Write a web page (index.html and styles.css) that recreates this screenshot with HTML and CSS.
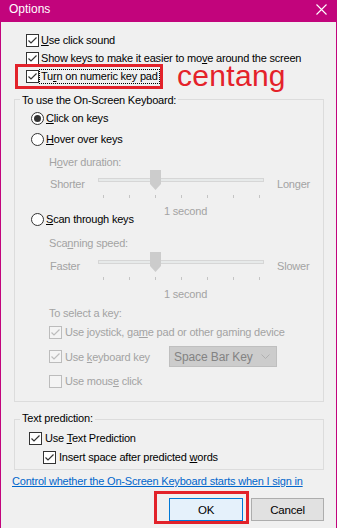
FILE: index.html
```html
<!DOCTYPE html>
<html>
<head>
<meta charset="utf-8">
<link rel="stylesheet" href="styles.css">
</head>
<body>
<div class="win">
  <div class="titlebar">
    <span class="title">Options</span>
    <svg class="close" width="11" height="11" viewBox="0 0 11 11"><path d="M0.5 0.5L10.5 10.5M10.5 0.5L0.5 10.5" stroke="#fff" stroke-width="1.1" fill="none"/></svg>
  </div>

  <div class="toprows">
    <div class="row cbrow"><span class="cb"><svg width="11" height="11" viewBox="0 0 11 11"><path d="M1.5 5.5L4 8L9.5 2.5" stroke="#333" stroke-width="1.2" fill="none"/></svg></span><span><u>U</u>se click sound</span></div>
    <div class="row cbrow"><span class="cb"><svg width="11" height="11" viewBox="0 0 11 11"><path d="M1.5 5.5L4 8L9.5 2.5" stroke="#333" stroke-width="1.2" fill="none"/></svg></span><span>Show keys to make it easier to mo<u>v</u>e around the screen</span></div>
    <div class="row cbrow"><span class="cb"><svg width="11" height="11" viewBox="0 0 11 11"><path d="M1.5 5.5L4 8L9.5 2.5" stroke="#333" stroke-width="1.2" fill="none"/></svg></span><span class="focus">Tu<u>r</u>n on numeric key pad</span></div>
  </div>

  <div class="group g1">
    <div class="legend">To use the On-Screen Keyboard:</div>
    <div class="row radrow r1"><span class="rb on"></span><span><u>C</u>lick on keys</span></div>
    <div class="row radrow r2"><span class="rb"></span><span><u>H</u>over over keys</span></div>
    <div class="dis lbl hover-lbl">H<u>o</u>ver duration:</div>
    <div class="slider s1">
      <span class="sl-left dis">Shorter</span>
      <svg class="track" width="166" height="28" viewBox="0 0 166 28">
        <rect x="0.5" y="8.5" width="165" height="3" fill="#e7eaea" stroke="#d6d6d6"/>
        <path d="M52 0h11v14l-5.5 6l-5.5-6z" fill="#cccccc"/>
        <path d="M5.5 25v3M31.5 25v3M57.5 25v3M83.5 25v3M109.5 25v3M135.5 25v3M161.5 25v3" stroke="#c4c4c4" stroke-width="1"/>
      </svg>
      <span class="sl-right dis">Longer</span>
    </div>
    <div class="dis lbl sec sec1">1 second</div>
    <div class="row radrow r3"><span class="rb"></span><span><u>S</u>can through keys</span></div>
    <div class="dis lbl scan-lbl">Sca<u>n</u>ning speed:</div>
    <div class="slider s2">
      <span class="sl-left dis">Faster</span>
      <svg class="track" width="166" height="28" viewBox="0 0 166 28">
        <rect x="0.5" y="8.5" width="165" height="3" fill="#e7eaea" stroke="#d6d6d6"/>
        <path d="M52 0h11v14l-5.5 6l-5.5-6z" fill="#cccccc"/>
        <path d="M5.5 25v3M31.5 25v3M57.5 25v3M83.5 25v3M109.5 25v3M135.5 25v3M161.5 25v3" stroke="#c4c4c4" stroke-width="1"/>
      </svg>
      <span class="sl-right dis">Slower</span>
    </div>
    <div class="dis lbl sec sec2">1 second</div>
    <div class="dis lbl sel-lbl">To select a key:</div>
    <div class="row drow d1"><span class="cb off"><svg width="11" height="11" viewBox="0 0 11 11"><path d="M1.5 5.5L4 8L9.5 2.5" stroke="#bcbcbc" stroke-width="1.2" fill="none"/></svg></span><span class="dis">Use joystick, ga<u>m</u>e pad or other gaming device</span></div>
    <div class="row drow d2"><span class="cb off"><svg width="11" height="11" viewBox="0 0 11 11"><path d="M1.5 5.5L4 8L9.5 2.5" stroke="#bcbcbc" stroke-width="1.2" fill="none"/></svg></span><span class="dis kbd-lbl">Use <u>k</u>eyboard key</span>
      <div class="select"><span>Space Bar Key</span><svg width="9" height="6" viewBox="0 0 9 6"><path d="M0.5 0.5L4.5 4.5L8.5 0.5" stroke="#b0b0b0" fill="none"/></svg></div>
    </div>
    <div class="row drow d3"><span class="cb off"></span><span class="dis">Use mous<u>e</u> click</span></div>
  </div>

  <div class="group g2">
    <div class="legend">Text prediction:</div>
    <div class="row tprow t1"><span class="cb"><svg width="11" height="11" viewBox="0 0 11 11"><path d="M1.5 5.5L4 8L9.5 2.5" stroke="#333" stroke-width="1.2" fill="none"/></svg></span><span>Use <u>T</u>ext Prediction</span></div>
    <div class="row tprow t2"><span class="cb"><svg width="11" height="11" viewBox="0 0 11 11"><path d="M1.5 5.5L4 8L9.5 2.5" stroke="#333" stroke-width="1.2" fill="none"/></svg></span><span>Insert space after predicted <u>w</u>ords</span></div>
  </div>

  <div class="link">Control whether the On-Screen Keyboard starts when I sign in</div>

  <div class="buttons">
    <div class="btn ok">OK</div>
    <div class="btn cancel">Cancel</div>
  </div>

  <div class="mark mark1"></div>
  <div class="centang">centang</div>
  <div class="mark mark2"></div>
</div>
</body>
</html>
```

FILE: styles.css
```css
html, body {
  margin: 0;
  padding: 0;
  background: #f0f0f0;
}

.win {
  position: relative;
  width: 337px;
  height: 528px;
  box-sizing: border-box;
  border: 1px solid #c2047c;
  border-top: 0;
  border-bottom: 0;
  background: #f0f0f0;
  font-family: "Liberation Sans", Arial, sans-serif;
  font-size: 11px;
  letter-spacing: -0.2px;
  color: #000;
  overflow: hidden;
}

.titlebar {
  height: 22px;
  margin: 0 -1px;
  background: #c2047c;
  color: #fff;
  display: flex;
  align-items: flex-start;
  justify-content: space-between;
  padding: 2px 10px 0 9px;
  box-sizing: border-box;
}

.title {
  font-size: 12px;
  letter-spacing: 0;
  line-height: 14px;
}

.close {
  margin-top: 2px;
}

.toprows {
  padding: 9px 0 0 25px;
}

.row {
  display: flex;
  align-items: center;
  height: 18px;
  white-space: nowrap;
}

.cbrow {
  gap: 2px;
}

.cb {
  width: 13px;
  height: 13px;
  box-sizing: border-box;
  border: 1px solid #333;
  background: #fff;
  display: flex;
  flex: none;
}

.cb.off {
  border-color: #bcbcbc;
  background: #f4f4f4;
}

.rb {
  width: 13px;
  height: 13px;
  box-sizing: border-box;
  border: 1px solid #333;
  border-radius: 50%;
  background: #fff;
  flex: none;
}

.rb.on::after {
  content: "";
  display: block;
  width: 7px;
  height: 7px;
  margin: 2px;
  border-radius: 50%;
  background: #333;
}

.focus {
  outline: 1px dotted #000;
  outline-offset: 0;
  padding: 0 1px;
  margin-left: -1px;
  line-height: 13px;
}

.group {
  border: 1px solid #dcdcdc;
  margin: 0 12px 0 13px;
}

.g1 {
  margin-top: 14px;
  padding-bottom: 11px;
}

.g2 {
  margin-top: 17px;
  padding-bottom: 3px;
}

.legend {
  width: max-content;
  background: #f0f0f0;
  line-height: 14px;
  margin: -7px 0 0 5px;
  padding: 0 2px;
}

.g2 .legend {
  margin-top: -9px;
}

.radrow {
  padding-left: 16px;
  gap: 2px;
}

.r1 { margin-top: 2px; }
.r2 { margin-top: 3px; }
.r3 { margin-top: -8px; position: relative; }

.dis {
  color: #a3a3a3;
}

.lbl {
  line-height: 14px;
  padding-left: 34px;
  white-space: nowrap;
}

.hover-lbl { margin-top: 7px; }
.scan-lbl { margin-top: 8px; }
.sel-lbl { margin-top: 5px; }

.sec {
  padding-left: 149px;
}

.sec1 { margin-top: 6px; }
.sec2 { margin-top: 7px; }

.slider {
  display: flex;
  align-items: flex-start;
  padding-left: 35px;
  height: 28px;
}

.s1 { margin-top: 1px; }
.s2 { margin-top: 2px; }

.sl-left {
  width: 48px;
  line-height: 14px;
  margin-top: 7px;
  flex: none;
}

.track {
  flex: none;
  display: block;
}

.sl-right {
  margin-left: 13px;
  line-height: 14px;
  margin-top: 7px;
}

.drow {
  padding-left: 34px;
  gap: 3px;
}

.d1 { margin-top: 3px; }
.d2 { margin-top: 5px; height: 21px; }
.d3 { margin-top: 5px; }

.kbd-lbl {
  width: 101px;
  flex: none;
}

.select {
  width: 108px;
  height: 21px;
  box-sizing: border-box;
  background: #cccccc;
  border: 1px solid #bfbfbf;
  color: #838383;
  display: flex;
  align-items: center;
  justify-content: space-between;
  padding: 0 6px 0 4px;
  font-size: 12px;
  letter-spacing: -0.1px;
}

.tprow {
  gap: 3px;
}

.t1 { margin-top: 4px; padding-left: 14px; }
.t2 { margin-top: 1px; padding-left: 28px; }

.link {
  margin-top: 4px;
  padding-left: 11px;
  line-height: 14px;
  color: #0066cc;
  text-decoration: underline;
  white-space: nowrap;
}

.buttons {
  margin-top: 10px;
  display: flex;
  justify-content: flex-end;
  gap: 8px;
  padding-right: 12px;
}

.btn {
  height: 23px;
  box-sizing: border-box;
  display: flex;
  align-items: center;
  justify-content: center;
  font-size: 11.5px;
}

.ok {
  width: 74px;
  background: #e5f1fb;
  border: 1px solid #0078d7;
}

.cancel {
  width: 73px;
  background: #e1e1e1;
  border: 1px solid #adadad;
}

.mark {
  position: absolute;
  box-sizing: border-box;
  border: 3px solid #e2222a;
}

.mark1 {
  left: 14px;
  top: 64px;
  width: 148px;
  height: 25px;
}

.mark2 {
  left: 153px;
  top: 491px;
  width: 95px;
  height: 33px;
}

.centang {
  position: absolute;
  left: 176px;
  top: 66px;
  font-size: 30px;
  line-height: 20px;
  letter-spacing: 0.3px;
  color: #e4222a;
}
```
